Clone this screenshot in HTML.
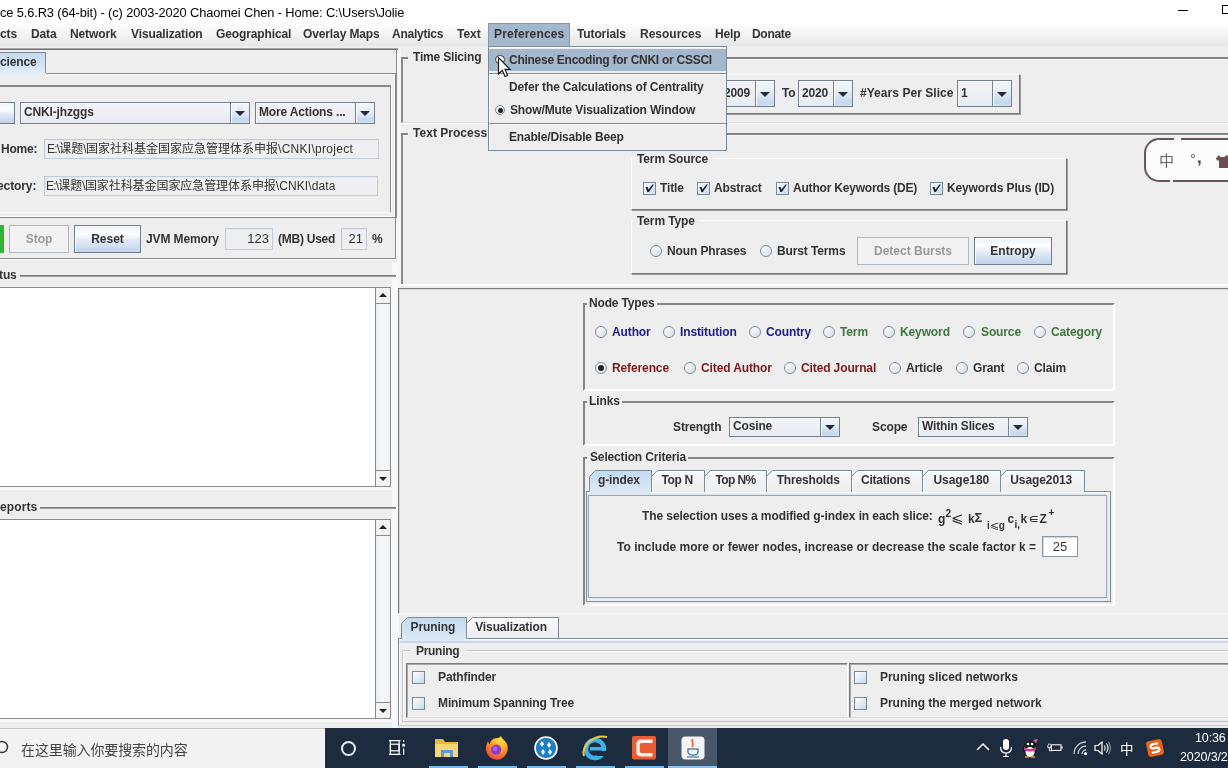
<!DOCTYPE html>
<html><head><meta charset="utf-8"><title>CiteSpace</title>
<style>
*{box-sizing:border-box;margin:0;padding:0}
html,body{width:1228px;height:768px;overflow:hidden;background:#eeeeee}
body{position:relative;font-family:"Liberation Sans","Noto Sans CJK SC",sans-serif;font-size:12px;color:#333;font-weight:bold}
.a{position:absolute}
.t{position:absolute;letter-spacing:-0.12px;white-space:nowrap;line-height:14px;height:14px;font-size:12px;font-weight:bold;color:#333}
.n{font-weight:normal}
.line{position:absolute;background:#7a8a99}
.combo{position:absolute;border:1px solid #75808c;background:linear-gradient(#f1f3f7,#eceff4 60%,#e6ebf2);box-shadow:inset 1px 1px 0 #f8f9fb}
.combo .txt{position:absolute;letter-spacing:-0.15px;left:3px;top:2px;line-height:14px;white-space:nowrap}
.combo .btn{position:absolute;right:0;top:0;bottom:0;width:19px;border-left:1px solid #75808c;background:linear-gradient(#f4f7fb,#e6eef8 40%,#c6d8ee 85%,#d2e0f0);box-shadow:inset 1px 1px 0 #fff}
.combo .btn:after{content:"";position:absolute;left:4px;top:50%;margin-top:-2px;border:5px solid transparent;border-top:5px solid #262a36;border-bottom:0}
.field{position:absolute;border:1px solid #c2cbd6;background:#efeff1;font-weight:normal;line-height:16px;white-space:nowrap;overflow:hidden;box-shadow:inset 1px 1px 0 #e6e9ee}
.btnj{position:absolute;border:1px solid #6f7f90;background:linear-gradient(#eaf1f9,#fdfeff 30%,#e2ebf6 55%,#bfd3ec 100%);text-align:center;box-shadow:inset 1px 1px 0 #fff}
.btnd{position:absolute;border:1px solid #b0b8c0;background:#f2f2f2;text-align:center;color:#999}
.radio{position:absolute;width:12px;height:12px;border-radius:50%;border:1px solid #7a8a99;background:linear-gradient(135deg,#ffffff,#d5dde6)}
.radio.on:after{content:"";position:absolute;left:2px;top:2px;width:6px;height:6px;border-radius:50%;background:#222}
.cb{position:absolute;width:13px;height:13px;border:1px solid #7a8a99;background:linear-gradient(135deg,#ffffff,#c9d9ea)}
.tab{position:absolute;border:1px solid #7a8a99;border-bottom:0;background:#eeeeee;text-align:center;line-height:20px;white-space:nowrap}
.tab.sel{background:linear-gradient(#c8ddf2,#dfeaf6)}
.white{position:absolute;background:#fff}
.raised{position:absolute;border:1px solid;border-color:#ffffff #7a7a7a #7a7a7a #ffffff;box-shadow:1px 1px 0 #a0a0a0, inset 0 0 0 0 #fff}

.sb{position:absolute;left:375px;width:15px;border-left:1px solid #8a8a8a;background:linear-gradient(90deg,#e9eef4,#f6f8fb 40%,#eef1f5)}
.sb i{position:absolute;left:0;width:14px;height:16px;background:#f2f2f2;display:block}
.sb i.up{top:0;border-bottom:1px solid #8a8a8a}
.sb i.dn{bottom:0;border-top:1px solid #8a8a8a}
.sb i:after{content:"";position:absolute;left:3px;top:5px;border:4px solid transparent}
.sb i.up:after{border-bottom:4px solid #222;border-top:0}
.sb i.dn:after{border-top:4px solid #222;border-bottom:0;top:6px}

.sup{font-size:10px;position:relative;top:-5px}
.sub{font-size:10px;position:relative;top:5px}
.f{position:absolute;top:0;line-height:14px}
.radio.sm.on:after{left:1.5px;top:1.5px;width:5px;height:5px}
</style></head><body><div style="position:absolute;left:0;top:0;width:1228px;height:768px;will-change:transform">

<!-- title bar -->
<div class="a" style="left:0;top:0;width:1228px;height:22px;background:#fff"></div>
<div class="t n" id="title" style="left:0;top:4.5px;font-size:12.85px;line-height:16px;height:16px;color:#000">ce 5.6.R3 (64-bit) - (c) 2003-2020 Chaomei Chen - Home: C:\Users\Jolie</div>
<div class="a" style="left:1178px;top:10px;width:10px;height:1px;background:#000"></div>
<div class="a" style="left:1222px;top:5px;width:10px;height:9px;border:1px solid #000"></div>

<!-- menubar -->
<div class="a" id="menubar" style="left:0;top:22px;width:1228px;height:24px;background:linear-gradient(#ffffff,#f4f4f4 50%,#e6e6e6)"></div>
<div class="a" style="left:488px;top:23px;width:82px;height:24px;background:#a3b8cc;border:1px solid #8799ad;border-bottom:0"></div>
<div class="t" style="left:0;top:27px">cts</div>
<div class="t" style="left:31px;top:27px">Data</div>
<div class="t" style="left:70px;top:27px">Network</div>
<div class="t" style="left:131px;top:27px">Visualization</div>
<div class="t" style="left:216px;top:27px">Geographical</div>
<div class="t" style="left:303px;top:27px">Overlay Maps</div>
<div class="t" style="left:392px;top:27px;letter-spacing:-0.25px">Analytics</div>
<div class="t" style="left:457px;top:27px;letter-spacing:0px">Text</div>
<div class="t" style="left:494px;top:27px;letter-spacing:0.15px">Preferences</div>
<div class="t" style="left:577px;top:27px">Tutorials</div>
<div class="t" style="left:640px;top:27px;letter-spacing:0px">Resources</div>
<div class="t" style="left:715px;top:27px">Help</div>
<div class="t" style="left:752px;top:27px;letter-spacing:-0.3px">Donate</div>

<!-- LEFT PANEL -->
<div id="left">
<!-- left top border -->
<div class="line" style="left:0;top:48px;width:398px;height:2px;background:linear-gradient(#a8a8a8 50%,#707070 50%)"></div>
<div class="line" style="left:396px;top:49px;width:1px;height:210px;background:#8a8a8a"></div>
<!-- tab cience -->
<div class="a" style="left:-2px;top:52px;width:48px;height:22px;border:1px solid #7a8a99;border-bottom:0;background:linear-gradient(#c3daf1,#d4e4f5 60%,#e4eef8)"></div>
<div class="t" style="left:0;top:55px">cience</div>
<!-- tab content border -->
<div class="a" style="left:-2px;top:73px;width:398px;height:145px;border:1px solid #7a8a99;box-shadow:inset -1px -1px 0 #fff, inset 0 1px 0 #fff"></div>
<div class="a" style="left:0;top:73px;width:46px;height:2px;background:#e4eef8"></div>
<!-- inner panel -->
<div class="a" style="left:-2px;top:85px;width:393px;height:128px;border:2px solid #8a8a8a;border-right-width:1px;border-bottom:1px solid #fff;box-shadow:1px 0 0 #fff"></div>
<!-- small button on left -->
<div class="btnj" style="left:-10px;top:102px;width:25px;height:22px"></div>
<div class="combo" style="left:20px;top:102px;width:230px;height:22px"><div class="txt">CNKI-jhzggs</div><div class="btn"></div></div>
<div class="combo" style="left:255px;top:102px;width:120px;height:22px"><div class="txt">More Actions ...</div><div class="btn"></div></div>
<div class="t" style="left:1px;top:142px;letter-spacing:-0.2px">Home:</div>
<div class="field" style="left:44px;top:139px;width:335px;height:20px;padding:1px 2px"><span style="letter-spacing:-0.8px">E:\</span>课题<span style="letter-spacing:-0.6px">\</span>国家社科基金国家应急管理体系申报<span style="letter-spacing:0.28px">\CNKI\project</span></div>
<div class="t" style="left:-3px;top:179px;letter-spacing:-0.1px">ectory:</div>
<div class="field" style="left:44px;top:176px;width:334px;height:20px;padding:1px 1px;letter-spacing:-0.07px"><span style="letter-spacing:-0.8px">E:\</span>课题<span style="letter-spacing:-0.6px">\</span>国家社科基金国家应急管理体系申报<span style="letter-spacing:0.1px">\CNKI\data</span></div>
<!-- button row frame -->
<div class="a" style="left:-2px;top:217px;width:398px;height:42px;border:1px solid #8a8a8a;border-top:0;box-shadow:1px 1px 0 #fff"></div>
<div class="a" style="left:0;top:225px;width:4px;height:28px;background:#2fb52f"></div>
<div class="btnd" style="left:9px;top:225px;width:60px;height:28px;line-height:26px">Stop</div>
<div class="btnj" style="left:74px;top:225px;width:67px;height:28px;line-height:26px">Reset</div>
<div class="t" style="left:146px;top:232px">JVM Memory</div>
<div class="field" style="left:225px;top:228px;width:48px;height:22px;text-align:right;padding:2px 3px;font-size:13px">123</div>
<div class="t" style="left:278px;top:232px;letter-spacing:-0.25px">(MB) Used</div>
<div class="field" style="left:341px;top:228px;width:26px;height:22px;text-align:right;padding:2px 3px;font-size:13px">21</div>
<div class="t" style="left:372px;top:232px">%</div>
<!-- divider -->
<div class="a" style="left:392px;top:262px;width:7px;height:466px;background:#f8f8f8"></div>
<div class="a" style="left:397px;top:50px;width:4px;height:236px;background:#f6f6f6"></div>
<!-- Status -->
<div class="t" style="left:-1px;top:268px">tus</div>
<div class="line" style="left:20px;top:275px;width:376px;height:2px;background:linear-gradient(#7c7c7c 50%,#9c9c9c 50%)"></div>
<div class="a" style="left:-1px;top:287px;width:392px;height:200px;border:1px solid #8a8a8a;background:#fff;box-shadow:0 2px 0 1px #f8f8f8"></div>
<div class="sb" style="top:288px;height:198px"><i class="up"></i><i class="dn"></i></div>
<!-- Reports -->
<div class="t" style="left:0px;top:500px;letter-spacing:0.1px">eports</div>
<div class="line" style="left:40px;top:507px;width:356px;height:2px;background:linear-gradient(#7c7c7c 50%,#9c9c9c 50%)"></div>
<div class="a" style="left:-1px;top:519px;width:392px;height:200px;border:1px solid #8a8a8a;background:#fff;box-shadow:0 2px 0 1px #f8f8f8"></div>
<div class="sb" style="top:520px;height:198px"><i class="up"></i><i class="dn"></i></div>
</div>
<!-- RIGHT PANEL -->
<div id="right">
<!-- Time Slicing titled border -->
<div class="a" style="left:401px;top:57px;width:840px;height:66px;border:1px solid #808080;border-left:2px solid #888;border-top:2px solid #848484;border-bottom-color:#dcdcdc;box-shadow:inset 0 1px 0 #f8f8f8,0 1px 0 #fff"></div>
<div class="a" style="left:408px;top:50px;width:80px;height:14px;background:#eee"></div>
<div class="t" style="left:413px;top:50px;;letter-spacing:-0.18px">Time Slicing</div>
<!-- raised inner panel -->
<div class="a" style="left:600px;top:74px;width:420px;height:40px;border:1px solid;border-color:#fff #7a7a7a #7a7a7a #fff;box-shadow:1px 1px 0 #9a9a9a"></div>
<div class="combo" style="left:720px;top:80px;width:55px;height:27px"><div class="txt" style="top:5px">2009</div><div class="btn"></div></div>
<div class="t" style="left:782px;top:86px;">To</div>
<div class="combo" style="left:798px;top:80px;width:55px;height:27px"><div class="txt" style="top:5px">2020</div><div class="btn"></div></div>
<div class="t" style="left:860px;top:86px;;letter-spacing:0.05px">#Years Per Slice</div>
<div class="combo" style="left:957px;top:80px;width:55px;height:27px"><div class="txt" style="top:5px">1</div><div class="btn"></div></div>
<!-- Text Processing titled border -->
<div class="a" style="left:401px;top:133px;width:840px;height:152px;border:1px solid #808080;border-left:2px solid #888;border-top:2px solid #848484;border-bottom:0;box-shadow:inset 0 1px 0 #f8f8f8"></div>
<div class="a" style="left:408px;top:126px;width:100px;height:14px;background:#eee"></div>
<div class="t" style="left:413px;top:126px;;letter-spacing:0.03px">Text Processing</div>
<!-- Term Source -->
<div class="a" style="left:631px;top:158px;width:436px;height:52px;border:1px solid;border-color:#fff #7a7a7a #7a7a7a #fff;box-shadow:1px 1px 0 #9a9a9a"></div>
<div class="a" style="left:635px;top:152px;width:78px;height:14px;background:#eee"></div>
<div class="t" style="left:637px;top:152px;">Term Source</div>
<div class="cb" style="left:643px;top:182px"><svg width="11" height="11" viewBox="0 0 11 11" style="position:absolute;left:0;top:0"><path d="M1.4 4 L3.6 4 L4.4 6.4 L8.4 1.4 L9.9 1.4 L4.9 9 L3.4 9 Z" fill="#1e2230"/></svg></div><div class="t" style="left:660px;top:181px;">Title</div>
<div class="cb" style="left:697px;top:182px"><svg width="11" height="11" viewBox="0 0 11 11" style="position:absolute;left:0;top:0"><path d="M1.4 4 L3.6 4 L4.4 6.4 L8.4 1.4 L9.9 1.4 L4.9 9 L3.4 9 Z" fill="#1e2230"/></svg></div><div class="t" style="left:714px;top:181px;">Abstract</div>
<div class="cb" style="left:776px;top:182px"><svg width="11" height="11" viewBox="0 0 11 11" style="position:absolute;left:0;top:0"><path d="M1.4 4 L3.6 4 L4.4 6.4 L8.4 1.4 L9.9 1.4 L4.9 9 L3.4 9 Z" fill="#1e2230"/></svg></div><div class="t" style="left:793px;top:181px;;letter-spacing:-0.2px">Author Keywords (DE)</div>
<div class="cb" style="left:930px;top:182px"><svg width="11" height="11" viewBox="0 0 11 11" style="position:absolute;left:0;top:0"><path d="M1.4 4 L3.6 4 L4.4 6.4 L8.4 1.4 L9.9 1.4 L4.9 9 L3.4 9 Z" fill="#1e2230"/></svg></div><div class="t" style="left:947px;top:181px;;letter-spacing:-0.13px">Keywords Plus (ID)</div>
<!-- Term Type -->
<div class="a" style="left:631px;top:220px;width:436px;height:54px;border:1px solid;border-color:#fff #7a7a7a #7a7a7a #fff;box-shadow:1px 1px 0 #9a9a9a"></div>
<div class="a" style="left:635px;top:214px;width:64px;height:14px;background:#eee"></div>
<div class="t" style="left:637px;top:214px;">Term Type</div>
<div class="radio" style="left:650px;top:245px"></div><div class="t" style="left:667px;top:244px;">Noun Phrases</div>
<div class="radio" style="left:760px;top:245px"></div><div class="t" style="left:777px;top:244px;">Burst Terms</div>
<div class="btnd" style="left:857px;top:237px;width:112px;height:28px;line-height:26px">Detect Bursts</div>
<div class="btnj" style="left:974px;top:237px;width:78px;height:28px;line-height:26px">Entropy</div>
<!-- IME bar -->
<div class="a" style="left:1144px;top:138px;width:100px;height:44px;border:2px solid #6b5659;border-radius:15px;background:#fdfcfc"></div>
<div class="a" style="left:1174px;top:137px;width:7px;height:4px;background:#f4f2f2"></div>
<div class="a" style="left:1170px;top:179px;width:3px;height:4px;background:#f4f2f2"></div>
<div class="t n" style="left:1159px;top:151px;font-size:15px;line-height:18px;height:18px;color:#666;letter-spacing:0;font-family:'Noto Sans CJK SC',sans-serif">中</div>
<div class="t n" style="left:1190px;top:150px;font-size:15px;line-height:18px;height:18px;color:#555;letter-spacing:0">°</div>
<div class="t" style="left:1197px;top:149px;font-size:17px;line-height:18px;height:18px;color:#4a4245;letter-spacing:0">,</div>
<svg class="a" style="left:1216px;top:155px" width="14" height="13" viewBox="0 0 14 13"><path d="M0 3.500 L2.500 0 L4.500 2 L8.500 2 L10.500 0 L14 3 L14 13 L3 13 L3 5.500 L1 5.500 Z" fill="#6e4d50"/></svg>
<svg width="0" height="0" style="position:absolute"><defs><linearGradient id="tabsel" x1="0" y1="0" x2="0" y2="1"><stop offset="0" stop-color="#c3daf1"/><stop offset="1" stop-color="#dce8f5"/></linearGradient><linearGradient id="tabun" x1="0" y1="0" x2="0" y2="1"><stop offset="0" stop-color="#f8fafd"/><stop offset="0.6" stop-color="#f0f1f3"/><stop offset="1" stop-color="#eeeeee"/></linearGradient></defs></svg>
<!-- split line -->
<div class="a" style="left:401px;top:284px;width:840px;height:2px;background:#fff"></div>
<div class="a" style="left:398px;top:288px;width:840px;height:326px;border:1px solid #7a7a7a;border-bottom:1px solid #fff;box-shadow:inset 1px 1px 0 #d8d8d8"></div>
<!-- Node Types -->
<div class="a" style="left:583px;top:303px;width:532px;height:88px;border:2px solid;border-color:#858585 #fff #fff #858585"></div>
<div class="a" style="left:587px;top:296px;width:70px;height:14px;background:#eee"></div>
<div class="t" style="left:589px;top:296px;;letter-spacing:-0.17px">Node Types</div>
<div class="radio" style="left:595px;top:326px"></div><div class="t" style="left:612px;top:325px;color:#1c1c8a">Author</div>
<div class="radio" style="left:663px;top:326px"></div><div class="t" style="left:680px;top:325px;color:#1c1c8a">Institution</div>
<div class="radio" style="left:749px;top:326px"></div><div class="t" style="left:766px;top:325px;color:#1c1c8a">Country</div>
<div class="radio" style="left:823px;top:326px"></div><div class="t" style="left:840px;top:325px;color:#3c783c">Term</div>
<div class="radio" style="left:883px;top:326px"></div><div class="t" style="left:900px;top:325px;color:#3c783c">Keyword</div>
<div class="radio" style="left:963px;top:326px"></div><div class="t" style="left:981px;top:325px;color:#3c783c">Source</div>
<div class="radio" style="left:1034px;top:326px"></div><div class="t" style="left:1051px;top:325px;color:#3c783c">Category</div>
<div class="radio on" style="left:595px;top:362px"></div><div class="t" style="left:612px;top:361px;color:#7a1a1a">Reference</div>
<div class="radio" style="left:684px;top:362px"></div><div class="t" style="left:701px;top:361px;color:#7a1a1a">Cited Author</div>
<div class="radio" style="left:784px;top:362px"></div><div class="t" style="left:801px;top:361px;color:#7a1a1a">Cited Journal</div>
<div class="radio" style="left:889px;top:362px"></div><div class="t" style="left:906px;top:361px;">Article</div>
<div class="radio" style="left:956px;top:362px"></div><div class="t" style="left:973px;top:361px;">Grant</div>
<div class="radio" style="left:1017px;top:362px"></div><div class="t" style="left:1034px;top:361px;">Claim</div>
<!-- Links -->
<div class="a" style="left:583px;top:401px;width:532px;height:45px;border:2px solid;border-color:#858585 #fff #fff #858585"></div>
<div class="a" style="left:587px;top:394px;width:35px;height:14px;background:#eee"></div>
<div class="t" style="left:589px;top:394px;">Links</div>
<div class="t" style="left:673px;top:420px;">Strength</div>
<div class="combo" style="left:729px;top:417px;width:111px;height:20px"><div class="txt" style="top:1px">Cosine</div><div class="btn"></div></div>
<div class="t" style="left:872px;top:420px;">Scope</div>
<div class="combo" style="left:918px;top:417px;width:110px;height:20px"><div class="txt" style="top:1px">Within Slices</div><div class="btn"></div></div>
<!-- Selection Criteria -->
<div class="a" style="left:583px;top:457px;width:532px;height:149px;border:2px solid;border-color:#858585 #fff #fff #858585"></div>
<div class="a" style="left:587px;top:450px;width:101px;height:14px;background:#eee"></div>
<div class="t" style="left:590px;top:450px;;letter-spacing:-0.15px">Selection Criteria</div>
<div class="a" style="left:586px;top:491px;width:525px;height:111px;border:1px solid #7a8a99;box-shadow:inset 1px 1px 0 #fff"></div>
<div class="a" style="left:588px;top:495px;width:519px;height:103px;border:1px solid #9aa8b6;box-shadow:1px 1px 0 #dbe5f0, -1px -1px 0 #dbe5f0"></div>
<svg class="a" style="left:589px;top:470px" width="63" height="22" viewBox="0 0 63 22"><path d="M0.5 22 L0.5 6.5 L6.5 0.5 L62.5 0.5 L62.5 22" fill="url(#tabsel)" stroke="#7a8a99" stroke-width="1"/><path d="M1.5 22 L1.5 7 L7 1.5 L61.5 1.5" fill="none" stroke="#fff" stroke-width="1" opacity="0"/></svg><div class="t" style="left:598px;top:473px;letter-spacing:-0.13px">g-index</div>
<svg class="a" style="left:651px;top:470px" width="54" height="22" viewBox="0 0 54 22"><path d="M0.5 22 L0.5 6.5 L6.5 0.5 L53.5 0.5 L53.5 22" fill="url(#tabun)" stroke="#7a8a99" stroke-width="1"/><path d="M1.5 22 L1.5 7 L7 1.5 L52.5 1.5" fill="none" stroke="#fff" stroke-width="1" opacity="0.9"/></svg><div class="t" style="left:661.5px;top:473px;letter-spacing:-0.38px">Top N</div>
<svg class="a" style="left:704px;top:470px" width="63" height="22" viewBox="0 0 63 22"><path d="M0.5 22 L0.5 6.5 L6.5 0.5 L62.5 0.5 L62.5 22" fill="url(#tabun)" stroke="#7a8a99" stroke-width="1"/><path d="M1.5 22 L1.5 7 L7 1.5 L61.5 1.5" fill="none" stroke="#fff" stroke-width="1" opacity="0.9"/></svg><div class="t" style="left:715.5px;top:473px;letter-spacing:-0.6px">Top N%</div>
<svg class="a" style="left:766px;top:470px" width="86" height="22" viewBox="0 0 86 22"><path d="M0.5 22 L0.5 6.5 L6.5 0.5 L85.5 0.5 L85.5 22" fill="url(#tabun)" stroke="#7a8a99" stroke-width="1"/><path d="M1.5 22 L1.5 7 L7 1.5 L84.5 1.5" fill="none" stroke="#fff" stroke-width="1" opacity="0.9"/></svg><div class="t" style="left:776.7px;top:473px;letter-spacing:-0.17px">Thresholds</div>
<svg class="a" style="left:851px;top:470px" width="72" height="22" viewBox="0 0 72 22"><path d="M0.5 22 L0.5 6.5 L6.5 0.5 L71.5 0.5 L71.5 22" fill="url(#tabun)" stroke="#7a8a99" stroke-width="1"/><path d="M1.5 22 L1.5 7 L7 1.5 L70.5 1.5" fill="none" stroke="#fff" stroke-width="1" opacity="0.9"/></svg><div class="t" style="left:861px;top:473px;letter-spacing:-0.25px">Citations</div>
<svg class="a" style="left:922px;top:470px" width="79" height="22" viewBox="0 0 79 22"><path d="M0.5 22 L0.5 6.5 L6.5 0.5 L78.5 0.5 L78.5 22" fill="url(#tabun)" stroke="#7a8a99" stroke-width="1"/><path d="M1.5 22 L1.5 7 L7 1.5 L77.5 1.5" fill="none" stroke="#fff" stroke-width="1" opacity="0.9"/></svg><div class="t" style="left:933.5px;top:473px;letter-spacing:-0.05px">Usage180</div>
<svg class="a" style="left:1000px;top:470px" width="85" height="22" viewBox="0 0 85 22"><path d="M0.5 22 L0.5 6.5 L6.5 0.5 L84.5 0.5 L84.5 22" fill="url(#tabun)" stroke="#7a8a99" stroke-width="1"/><path d="M1.5 22 L1.5 7 L7 1.5 L83.5 1.5" fill="none" stroke="#fff" stroke-width="1" opacity="0.9"/></svg><div class="t" style="left:1010.3px;top:473px;letter-spacing:-0.1px">Usage2013</div>
<div class="a" style="left:590px;top:491px;width:61px;height:3px;background:#dce8f5"></div>
<div class="t" style="left:642px;top:509px;;letter-spacing:-0.09px">The selection uses a modified g-index in each slice:</div>
<div class="a" id="formula" style="left:938px;top:511.5px;width:120px;height:24px;font-size:12px;line-height:14px;font-weight:bold;color:#333;white-space:nowrap">
<span class="f" style="left:0">g</span>
<span class="f" style="left:7.5px;top:-5px;font-size:10px">2</span>
<span class="f" style="left:13px;top:-1px;font-size:15px;font-weight:normal">&#10877;</span>
<span class="f" style="left:30px">k</span>
<span class="f" style="left:36.5px;font-size:13px;top:-0.5px">&Sigma;</span>
<span class="f" style="left:49px;top:6px;font-size:10px">i<span style="font-size:11px;font-weight:normal">&#10877;</span>g</span>
<span class="f" style="left:69.5px">c</span>
<span class="f" style="left:76.5px;top:6px;font-size:10px">i,</span>
<span class="f" style="left:82.5px">k</span>
<span class="f" style="left:90.5px;font-weight:bold;font-size:10.5px;top:0.5px">&isin;</span>
<span class="f" style="left:101.500px">Z</span>
<span class="f" style="left:110.5px;top:-6px;font-size:10px">+</span>
</div>
<div class="t" style="left:617px;top:540px;letter-spacing:0.01px">To include more or fewer nodes, increase or decrease the scale factor k =</div>
<div class="a n" style="left:1042px;top:536px;width:36px;height:21px;border:1px solid #8a98a6;background:#fff;text-align:center;line-height:19px;font-weight:normal;font-size:13px;box-shadow:inset 1px 1px 0 #d0d8e0">25</div>
<!-- Bottom tabs -->
<svg class="a" style="left:401px;top:617px" width="66" height="22" viewBox="0 0 66 22"><path d="M0.5 22 L0.5 6.5 L6.5 0.5 L65.5 0.5 L65.5 22" fill="url(#tabsel)" stroke="#7a8a99" stroke-width="1"/><path d="M1.5 22 L1.5 7 L7 1.5 L64.5 1.5" fill="none" stroke="#fff" stroke-width="1" opacity="0"/></svg><div class="t" style="left:410.5px;top:620px;letter-spacing:-0.1px">Pruning</div>
<svg class="a" style="left:466px;top:617px" width="93" height="22" viewBox="0 0 93 22"><path d="M0.5 22 L0.5 6.5 L6.5 0.5 L92.5 0.5 L92.5 22" fill="url(#tabun)" stroke="#7a8a99" stroke-width="1"/><path d="M1.5 22 L1.5 7 L7 1.5 L91.5 1.5" fill="none" stroke="#fff" stroke-width="1" opacity="0.9"/></svg><div class="t" style="left:475.2px;top:620px;letter-spacing:-0.11px">Visualization</div>
<div class="a" style="left:398px;top:638px;width:840px;height:88px;border:1px solid #7a8a99;border-bottom:1px solid #b8cfe5;box-shadow:inset 1px 1px 0 #fff"></div>
<div class="a" style="left:402px;top:638px;width:64px;height:3px;background:#dce8f5"></div>
<div class="a" style="left:399px;top:641px;width:830px;height:2px;background:#c8d8ea"></div>
<div class="a" style="left:402px;top:650px;width:840px;height:72px;border:1px solid #c4c4c4;box-shadow:inset 1px 1px 0 #fff"></div>
<div class="a" style="left:410px;top:644px;width:56px;height:14px;background:#eee"></div>
<div class="t" style="left:416px;top:644px;;letter-spacing:-0.3px">Pruning</div>
<div class="a" style="left:406px;top:663px;width:442px;height:55px;border:1px solid;border-color:#7c7c7c #fff #dcdcdc #7c7c7c;box-shadow:inset 1px 1px 0 #a8a8a8"></div>
<div class="a" style="left:849px;top:663px;width:400px;height:55px;border:1px solid;border-color:#7c7c7c #fff #dcdcdc #7c7c7c;box-shadow:inset 1px 1px 0 #a8a8a8"></div>
<div class="cb" style="left:412px;top:671px"></div><div class="t" style="left:438px;top:670px;">Pathfinder</div>
<div class="cb" style="left:412px;top:697px"></div><div class="t" style="left:438px;top:696px;">Minimum Spanning Tree</div>
<div class="cb" style="left:854px;top:671px"></div><div class="t" style="left:880px;top:670px;;letter-spacing:-0.04px">Pruning sliced networks</div>
<div class="cb" style="left:854px;top:697px"></div><div class="t" style="left:880px;top:696px;;letter-spacing:-0.04px">Pruning the merged network</div>
</div>
<!-- POPUP -->
<div id="popup">
<div class="a" style="left:488px;top:46px;width:239px;height:105px;background:#eeeeee;border:1px solid #7a8a99;box-shadow:inset 1px 1px 0 #fff"></div>
<div class="a" style="left:489px;top:49px;width:237px;height:22px;background:#a3b8cc"></div>
<div class="a" style="left:489px;top:73px;width:237px;height:1px;background:#7a8a99"></div>
<div class="a" style="left:489px;top:74px;width:237px;height:1px;background:#fff"></div>
<div class="a" style="left:489px;top:123px;width:237px;height:1px;background:#7a8a99"></div>
<div class="a" style="left:489px;top:124px;width:237px;height:1px;background:#fff"></div>
<div class="radio" style="left:495px;top:54.500px;width:9.500px;height:9.500px;border:1.500px solid #2e3238;background:#fbfcfd"></div>
<div class="t" style="left:509px;top:53px;;letter-spacing:-0.27px">Chinese Encoding for CNKI or CSSCI</div>
<div class="t" style="left:509px;top:80px;;letter-spacing:-0.15px">Defer the Calculations of Centrality</div>
<div class="radio on sm" style="left:495px;top:105px;width:10px;height:10px"></div>
<div class="t" style="left:510px;top:103px;;letter-spacing:-0.13px">Show/Mute Visualization Window</div>
<div class="t" style="left:509px;top:130px;;letter-spacing:-0.18px">Enable/Disable Beep</div>
<svg class="a" style="left:496.500px;top:55.500px" width="16" height="24" viewBox="0 0 16 24"><path d="M1.5 1.5 L1.5 18 L5.3 14.3 L8 20.5 L10.6 19.4 L8 13.3 L13 13.3 Z" fill="#fff" stroke="#1a1a1a" stroke-width="1.2" stroke-linejoin="miter"/></svg>
</div>
<!-- TASKBAR -->
<div id="taskbar">
<div class="a" style="left:0;top:728px;width:1228px;height:40px;background:#1d2b3e"></div>
<div class="a" style="left:0;top:728px;width:325px;height:40px;background:#f2f2f2;border-top:1px solid #c8c8c8"></div>
<svg class="a" style="left:-8px;top:739px" width="20" height="20" viewBox="0 0 20 20"><circle cx="10" cy="8" r="5.5" fill="none" stroke="#333" stroke-width="1.4"/><path d="M6 12 L1 17" stroke="#333" stroke-width="1.4"/></svg>
<div class="t n" style="left:21px;top:739px;font-size:14px;line-height:20px;height:20px;color:#444;font-family:'Noto Sans CJK SC',sans-serif">在这里输入你要搜索的内容</div>
<!-- cortana -->
<div class="a" style="left:341px;top:740.5px;width:15px;height:15px;border:2px solid #e6eef5;border-radius:50%"></div>
<!-- task view -->
<svg class="a" style="left:388px;top:739px" width="18" height="17" viewBox="0 0 18 17"><g fill="none" stroke="#fff" stroke-width="1.2"><path d="M1 1.600 H12.500 M1 15.400 H12.500 M2.400 1.600 V15.400 M11.100 1.600 V15.400"/><rect x="2.400" y="5.200" width="8.700" height="6.600"/><path d="M15.600 9.500 V15.800 M15.600 1 V3"/></g><rect x="14.300" y="4.800" width="2.600" height="2.800" fill="#fff"/></svg>
<!-- folder -->
<svg class="a" style="left:434px;top:736px" width="26" height="24" viewBox="0 0 26 24"><path d="M1 3 H9 L11 6 H24 V21 H1 Z" fill="#e9b93a"/><path d="M1 8 H24 V21 H1 Z" fill="#f7d673"/><rect x="7" y="14" width="12" height="7" fill="#5b9bd5"/><rect x="10" y="17" width="6" height="4" fill="#f7d673"/></svg>
<!-- firefox -->
<svg class="a" style="left:484px;top:735px" width="26" height="26" viewBox="0 0 26 26"><defs><radialGradient id="ffg" cx="0.65" cy="0.2" r="0.95"><stop offset="0" stop-color="#ffe14a"/><stop offset="0.45" stop-color="#ff9a1e"/><stop offset="1" stop-color="#e7304f"/></radialGradient></defs><path d="M13 3 C15 3 16 2 17 1 C18 4 21 5 23 9 C25 14 23 21 17 24 C10 26.500 3 22 2 15 C1.500 11 3 8 4 6 C4.500 8 5 9 6 9 C6 6 9 3 13 3 Z" fill="url(#ffg)"/><circle cx="12" cy="14.500" r="5.200" fill="#8a3fd1"/><circle cx="11.200" cy="13.800" r="2.400" fill="#b55be8"/><path d="M5 10 C8 8 11 8.500 13 10 C10 10 8 11 7 13 Z" fill="#ff8a1e"/></svg>
<!-- blue circle -->
<svg class="a" style="left:533px;top:735px" width="26" height="26" viewBox="0 0 26 26"><circle cx="13" cy="13" r="11" fill="#1f7fc4" stroke="#fff" stroke-width="1.6"/><g fill="#fff"><path d="M9 6 l2 3 l-2 3 l-2 -3 z M16 7 l2 3 l-2 3 l-2 -3 z M10 14 l2 3 l-2 3 l-2 -3 z M17 14 l2 3 l-2 3 l-2 -3 z"/></g></svg>
<!-- IE -->
<svg class="a" style="left:580px;top:734px" width="30" height="28" viewBox="0 0 30 28"><circle cx="15" cy="15" r="9" fill="none" stroke="#3bb3e8" stroke-width="4.5"/><rect x="10" y="13" width="14" height="3.5" fill="#3bb3e8"/><rect x="17" y="17" width="9" height="5" fill="#1d2b3e"/><path d="M4 22 C1 12 14 0 27 3" fill="none" stroke="#f2c53a" stroke-width="2"/></svg>
<!-- camtasia -->
<svg class="a" style="left:632px;top:736px" width="24" height="23.5" viewBox="0 0 24 23.5"><rect x="0" y="0" width="24" height="23.5" rx="2" fill="#ea5c33"/><path d="M20.500 3.500 H9 Q4.300 3.500 4.300 8 V15.800 Q4.300 20.400 9 20.400 H20.500 V17 H9.500 Q7.700 17 7.700 15.300 V8.600 Q7.700 6.900 9.500 6.900 H20.500 Z" fill="#fdeee8"/></svg>
<!-- java -->
<div class="a" style="left:668px;top:728px;width:49px;height:40px;background:#48566a"></div>
<svg class="a" style="left:681px;top:736px" width="24" height="24" viewBox="0 0 24 24"><rect x="0.5" y="0.5" width="23" height="23" rx="4" fill="#f4f4f6"/><path d="M12 3 C9 6 14 7 11 11" fill="none" stroke="#e2612c" stroke-width="1.5"/><path d="M7 13 H17 V16 Q17 19 12 19 Q7 19 7 16 Z" fill="none" stroke="#5382a1" stroke-width="1.4"/><path d="M6 21 H18" stroke="#5382a1" stroke-width="1.3"/></svg>
<!-- underlines -->
<div class="a" style="left:429px;top:766px;width:39px;height:2px;background:#76b9ed"></div>
<div class="a" style="left:478px;top:766px;width:39px;height:2px;background:#76b9ed"></div>
<div class="a" style="left:527px;top:766px;width:39px;height:2px;background:#76b9ed"></div>
<div class="a" style="left:576px;top:766px;width:39px;height:2px;background:#76b9ed"></div>
<div class="a" style="left:625px;top:766px;width:39px;height:2px;background:#76b9ed"></div>
<div class="a" style="left:668px;top:766px;width:49px;height:2px;background:#8cc4f0"></div>
<!-- tray -->
<svg class="a" style="left:976px;top:742px" width="14" height="10" viewBox="0 0 14 10"><path d="M1 8 L7 2 L13 8" fill="none" stroke="#fff" stroke-width="1.5"/></svg>
<svg class="a" style="left:999px;top:738px" width="14" height="20" viewBox="0 0 14 20"><rect x="4" y="1" width="6" height="11" rx="3" fill="#fff"/><path d="M1.5 9 Q1.5 15 7 15 Q12.500 15 12.500 9 M7 15 V18 M4 18.500 H10" fill="none" stroke="#fff" stroke-width="1.2"/></svg>
<svg class="a" style="left:1021px;top:738px" width="18" height="20" viewBox="0 0 18 20"><ellipse cx="9" cy="11" rx="7" ry="8" fill="#1a1a1a"/><ellipse cx="9" cy="14" rx="4.500" ry="5" fill="#fff"/><path d="M3 9 Q9 13 15 9 L15 12 Q9 15 3 12 Z" fill="#d63a8a"/><circle cx="7" cy="6" r="1.300" fill="#fff"/><circle cx="11" cy="6" r="1.300" fill="#fff"/><path d="M12 2 L17 1 L15 5 Z" fill="#e85aa8"/><path d="M4 19 H8 M10 19 H14" stroke="#e8a030" stroke-width="1.500"/></svg>
<svg class="a" style="left:1047px;top:742px" width="16" height="11.2" viewBox="0 0 20 14"><rect x="5.500" y="3.500" width="12" height="7" fill="none" stroke="#fff" stroke-width="1.300"/><rect x="18" y="5.500" width="1.500" height="3" fill="#fff"/><path d="M1 4 V7 H5 V4 M2 2 V4 M4 2 V4 M3 7 V11 H6" fill="none" stroke="#fff" stroke-width="1.100"/></svg>
<svg class="a" style="left:1072px;top:740px" width="18" height="16" viewBox="0 0 18 16"><g fill="none" stroke="#c0c8d0" stroke-width="1.300"><path d="M2 14 A12 12 0 0 1 14 2"/><path d="M6 14 A8 8 0 0 1 14 6"/><path d="M10 14 A4 4 0 0 1 14 10"/></g><circle cx="13.500" cy="13.500" r="1.600" fill="#fff"/></svg>
<svg class="a" style="left:1093px;top:740px" width="20" height="16" viewBox="0 0 20 16"><path d="M2 5.500 H5 L9 2 V14 L5 10.500 H2 Z" fill="none" stroke="#fff" stroke-width="1.200"/><path d="M11.500 5.500 Q13 8 11.500 10.500 M13.500 3.500 Q16.500 8 13.500 12.500" fill="none" stroke="#fff" stroke-width="1.100"/><path d="M15.500 2 Q19.500 8 15.500 14" fill="none" stroke="#8a96a4" stroke-width="1.100"/></svg>
<div class="t n" style="left:1120px;top:738px;font-size:13.5px;line-height:20px;height:20px;color:#fff;font-family:'Noto Sans CJK SC',sans-serif">中</div>
<svg class="a" style="left:1145px;top:738px" width="20" height="20" viewBox="0 0 20 20"><rect x="2" y="2" width="16" height="16" rx="3" fill="#e8641e" transform="rotate(-12 10 10)"/><path d="M14 6 H8.500 Q6 6 6 8 Q6 10 8.500 10 H11.500 Q14 10 14 12 Q14 14 11.500 14 H6" fill="none" stroke="#fff" stroke-width="2.200" transform="rotate(-12 10 10)"/></svg>
<div class="t n" style="left:1195px;top:730px;font-size:12.5px;line-height:16px;height:16px;color:#fff">10:36</div>
<div class="t n" style="left:1180px;top:749px;font-size:12.5px;line-height:16px;height:16px;color:#fff">2020/3/2</div>
</div>
</div></body></html>
